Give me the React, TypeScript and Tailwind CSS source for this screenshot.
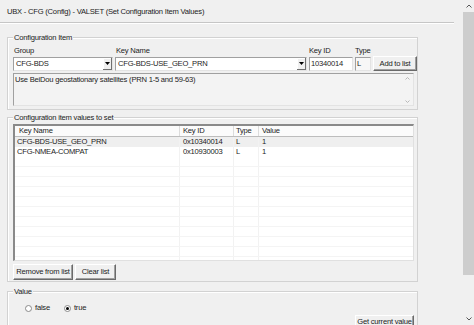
import React from "react";

const font = "font-['Liberation_Sans',Arial,sans-serif]";

function GroupBox({ label, className, children }: { label: string; className: string; children?: React.ReactNode }) {
  return (
    <div className={"relative border border-[#d2d2d2] shadow-[inset_1px_1px_0_#ffffff] " + className}>
      <span className="absolute left-[5px] top-[-6px] bg-[#f0f0f0] px-[1px] leading-[11px]">{label}</span>
      {children}
    </div>
  );
}

function Sunken({ className, children }: { className: string; children?: React.ReactNode }) {
  return (
    <div className={"border border-t-[#a0a0a0] border-l-[#a0a0a0] border-r-[#e3e3e3] border-b-[#e3e3e3] " + className}>
      {children}
    </div>
  );
}

function Combo({ text, width }: { text: string; width: string }) {
  return (
    <Sunken className={"h-[14px] bg-white flex items-center " + width}>
      <span className="flex-1 pl-[2px] leading-[12px]">{text}</span>
      <div className="w-[9px] h-[12px] bg-[#f0f0f0] border-r border-b border-[#707070] shadow-[inset_1px_1px_0_#ffffff] flex items-center justify-center">
        <svg width="5" height="3" viewBox="0 0 5 3"><path d="M0 0h5L2.5 3z" fill="#000" /></svg>
      </div>
    </Sunken>
  );
}

function Button({ text, className }: { text: string; className: string }) {
  return (
    <div
      className={
        "bg-[#f0f0f0] border border-t-[#ffffff] border-l-[#ffffff] border-r-[#6a6a6a] border-b-[#6a6a6a] shadow-[inset_-1px_-1px_0_#a0a0a0] flex items-center justify-center leading-[12px] whitespace-nowrap " +
        className
      }
    >
      {text}
    </div>
  );
}

const rows = [
  { name: "CFG-BDS-USE_GEO_PRN", id: "0x10340014", type: "L", value: "1", sel: true },
  { name: "CFG-NMEA-COMPAT", id: "0x10930003", type: "L", value: "1", sel: false },
];

export default function App() {
  return (
    <div className={"w-[474px] h-[325px] bg-[#f0f0f0] flex overflow-hidden text-[7.6px] tracking-[-0.22px] text-[#1c1c1c] whitespace-nowrap " + font}>
      <div className="w-[463px] flex flex-col shrink-0">
        <div className="w-[454px] h-[23px] border-b border-[#c6c6c6] shadow-[0_1px_0_#ffffff] pl-[7px] pt-[7px] leading-[10px] shrink-0">
          UBX - CFG (Config) - VALSET (Set Configuration Item Values)
        </div>

        <GroupBox label="Configuration Item" className="mt-[14px] ml-[7px] w-[411px] h-[73px] shrink-0 pl-[5px] pt-[8px]">
          <div className="flex gap-[2px]">
            <div className="flex flex-col">
              <span className="pl-[1px] leading-[10px] h-[11px]">Group</span>
              <Combo text="CFG-BDS" width="w-[100px]" />
            </div>
            <div className="flex flex-col">
              <span className="pl-[1px] leading-[10px] h-[11px]">Key Name</span>
              <Combo text="CFG-BDS-USE_GEO_PRN" width="w-[192px]" />
            </div>
            <div className="flex flex-col">
              <span className="leading-[10px] h-[11px]">Key ID</span>
              <Sunken className="w-[44px] h-[14px] bg-white pl-[1px] leading-[12px]">10340014</Sunken>
            </div>
            <div className="flex flex-col">
              <span className="leading-[10px] h-[11px]">Type</span>
              <Sunken className="w-[16px] h-[14px] bg-[#f7f7f7] pl-[1px] leading-[12px]">L</Sunken>
            </div>
            <div className="flex flex-col justify-end">
              <Button text="Add to list" className="w-[44px] h-[15px]" />
            </div>
          </div>
          <Sunken className="mt-[2px] w-[401px] h-[33px] bg-[#f3f3f3] relative">
            <span className="absolute left-[1px] top-[1px] leading-[10px]">Use BeiDou geostationary satellites (PRN 1-5 and 59-63)</span>
            <div className="absolute right-[2px] top-[3px] bottom-[2px] w-[8px] flex flex-col justify-between items-center">
              <svg width="5" height="3" viewBox="0 0 5 3"><path d="M0.5 2.5L2.5 0.5L4.5 2.5" stroke="#b8b8b8" fill="none" /></svg>
              <svg width="5" height="3" viewBox="0 0 5 3"><path d="M0.5 0.5L2.5 2.5L4.5 0.5" stroke="#b8b8b8" fill="none" /></svg>
            </div>
          </Sunken>
        </GroupBox>

        <GroupBox label="Configuration item values to set" className="mt-[7px] ml-[7px] w-[411px] h-[165px] shrink-0 pl-[5px] pt-[6px]">
          <div className="w-[401px] h-[137px] bg-white border-l-2 border-t-2 border-l-[#8a8a8a] border-t-[#8a8a8a] border-r border-b border-r-[#e0e0e0] border-b-[#e0e0e0] flex flex-col overflow-hidden">
            <div className="h-[11px] flex border-b border-[#bdbdbd] bg-[#fbfbfb] leading-[10px] shrink-0">
              <div className="w-[165px] pl-[4px] border-r border-[#dcdcdc]">Key Name</div>
              <div className="w-[54px] pl-[3px] border-r border-[#dcdcdc]">Key ID</div>
              <div className="w-[25px] pl-[2px] border-r border-[#dcdcdc]">Type</div>
              <div className="flex-1 pl-[3px]">Value</div>
            </div>
            <div className="flex-1 flex flex-col">
              {rows.map((r) => (
                <div key={r.name} className={"h-[10px] flex leading-[10px] " + (r.sel ? "bg-[#efefef]" : "bg-white")}>
                  <div className="w-[165px] pl-[2px] border-r border-[#f2f2f2]">{r.name}</div>
                  <div className="w-[54px] pl-[3px] border-r border-[#f2f2f2]">{r.id}</div>
                  <div className="w-[25px] pl-[2px] border-r border-[#f2f2f2]">{r.type}</div>
                  <div className="flex-1 pl-[3px]">{r.value}</div>
                </div>
              ))}
              {Array.from({ length: 12 }).map((_, i) => (
                <div key={i} className="h-[10px] flex border-b border-[#f4f4f4]">
                  <div className="w-[165px] border-r border-[#f2f2f2]" />
                  <div className="w-[54px] border-r border-[#f2f2f2]" />
                  <div className="w-[25px] border-r border-[#f2f2f2]" />
                  <div className="flex-1" />
                </div>
              ))}
            </div>
          </div>
          <div className="flex gap-[2px] mt-[3px]">
            <Button text="Remove from list" className="w-[60px] h-[16px]" />
            <Button text="Clear list" className="w-[41px] h-[16px]" />
          </div>
        </GroupBox>

        <GroupBox label="Value" className="mt-[9px] ml-[7px] w-[411px] h-[60px] shrink-0 pl-[17px] pt-[11px]">
          <div className="flex items-center gap-[10px] leading-[10px]">
            <div className="flex items-center gap-[3px]">
              <div className="w-[7px] h-[7px] rounded-full border border-[#8a8a8a] bg-white" />
              <span>false</span>
            </div>
            <div className="flex items-center gap-[3px] ml-[4px]">
              <div className="w-[7px] h-[7px] rounded-full border border-[#8a8a8a] bg-white flex items-center justify-center">
                <div className="w-[3px] h-[3px] rounded-full bg-black" />
              </div>
              <span>true</span>
            </div>
          </div>
          <div className="flex justify-end pr-[3px] mt-[2px]">
            <Button text="Get current value" className="w-[59px] h-[14px]" />
          </div>
        </GroupBox>
      </div>

      <div className="w-[11px] flex flex-col shrink-0 bg-[#f0f0f0]">
        <div className="h-[12px] flex items-center justify-center">
          <svg width="6" height="4" viewBox="0 0 6 4"><path d="M0.5 3.5L3 1L5.5 3.5" stroke="#555" fill="none" /></svg>
        </div>
        <div className="h-[263px] bg-[#cdcdcd]" />
        <div className="flex-1" />
        <div className="h-[12px] flex items-center justify-center">
          <svg width="6" height="4" viewBox="0 0 6 4"><path d="M0.5 0.5L3 3L5.5 0.5" stroke="#555" fill="none" /></svg>
        </div>
      </div>
    </div>
  );
}
